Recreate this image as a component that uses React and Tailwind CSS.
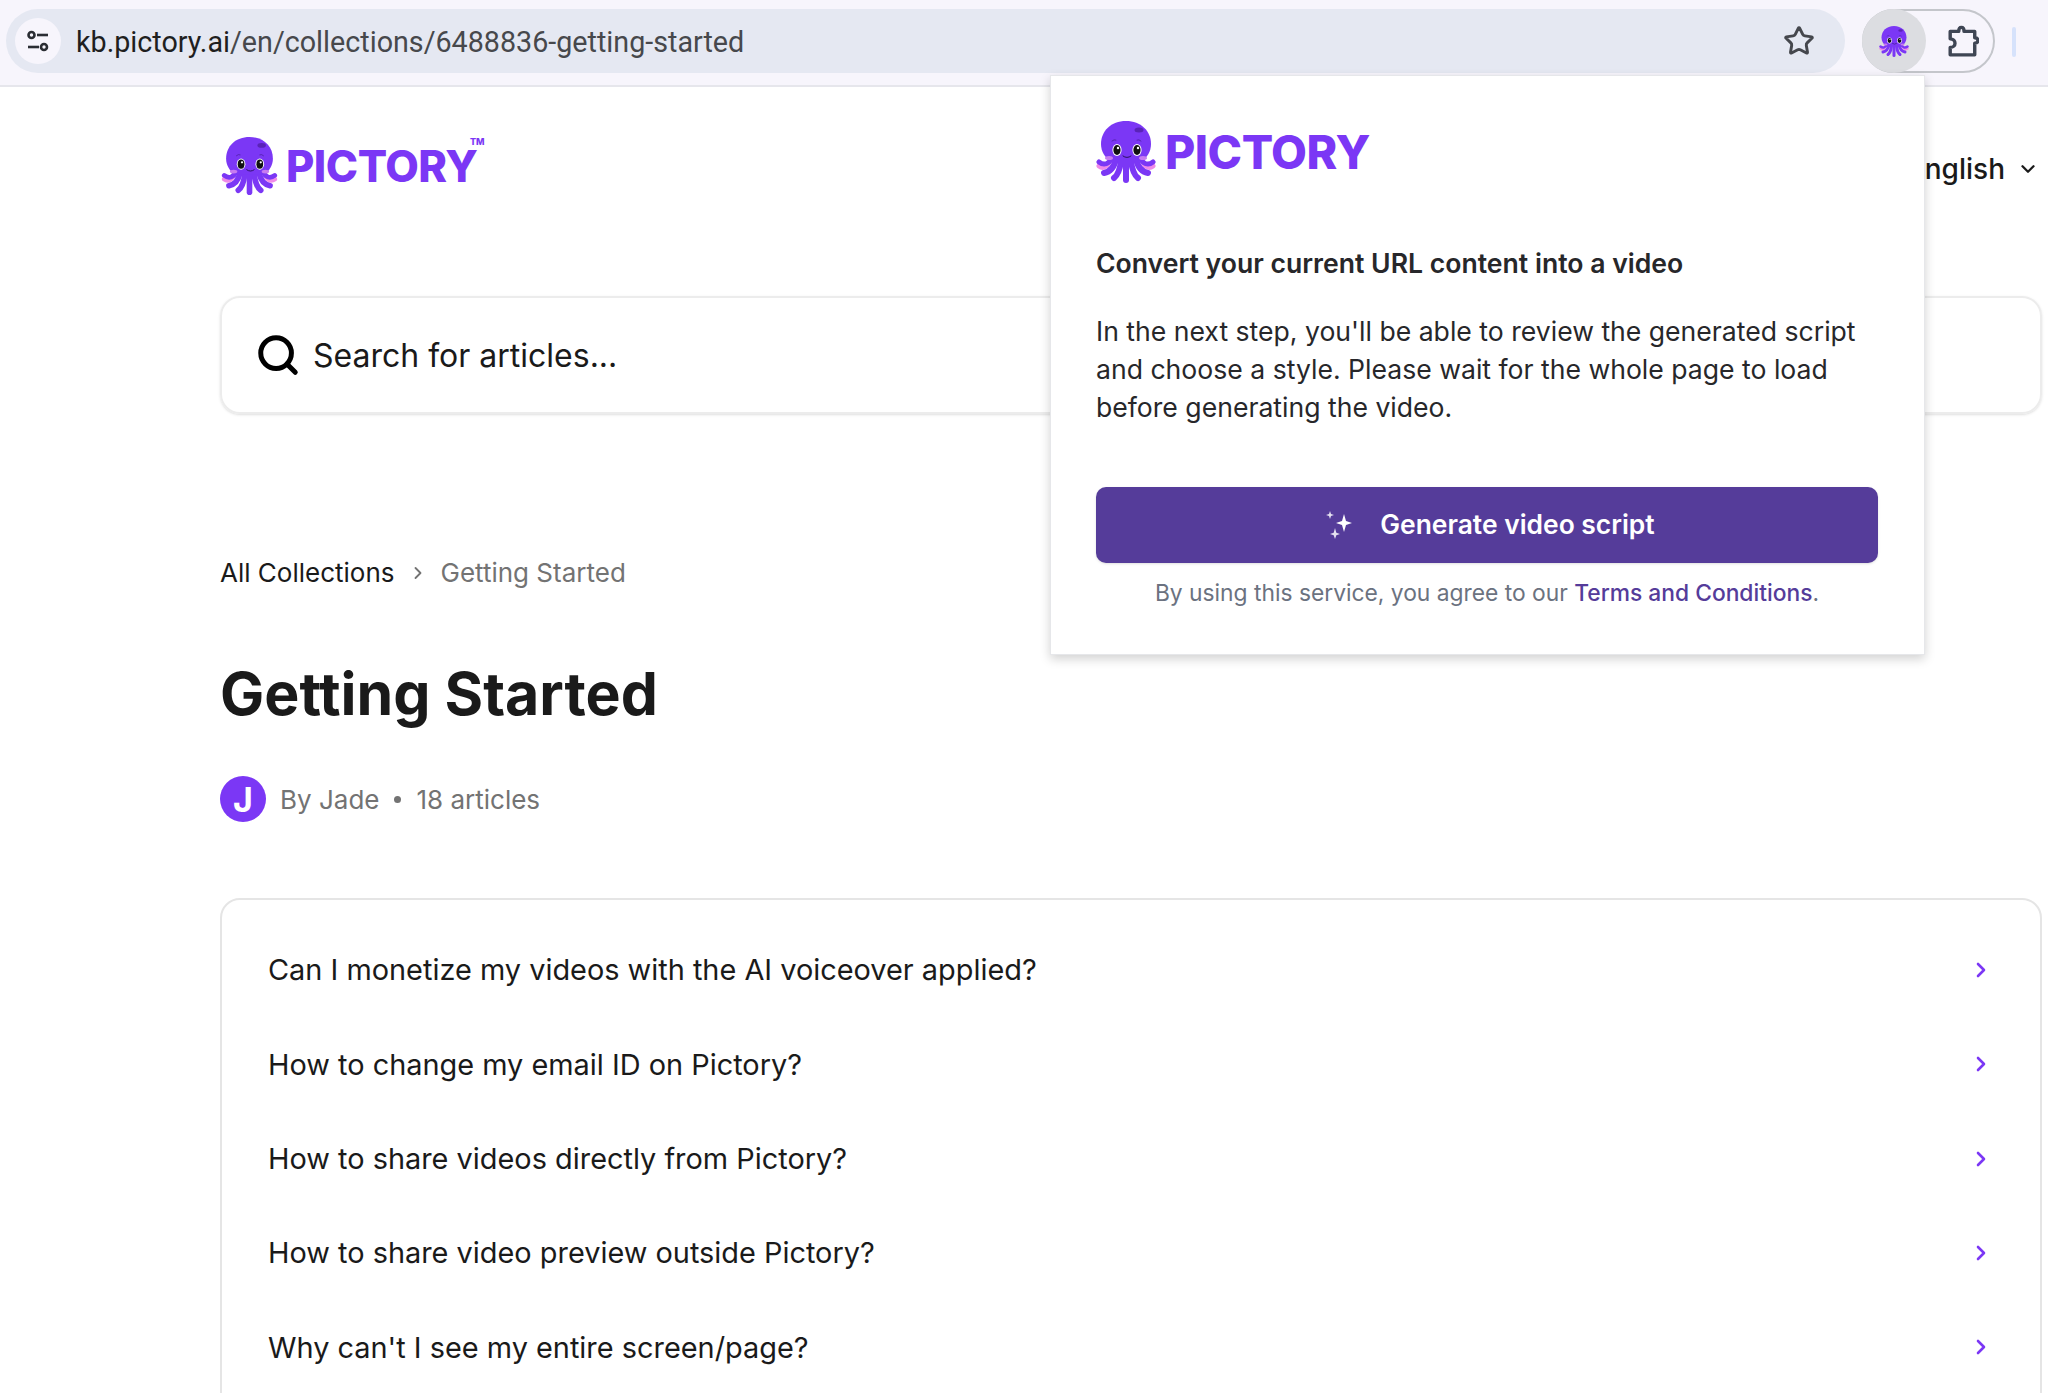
import { ChevronDown, ChevronRight, Search, Star } from "lucide-react";

const articles = [
  "Can I monetize my videos with the AI voiceover applied?",
  "How to change my email ID on Pictory?",
  "How to share videos directly from Pictory?",
  "How to share video preview outside Pictory?",
  "Why can't I see my entire screen/page?",
];

function Octopus({ className }) {
  return (
    <svg viewBox="0 0 60 62" className={className}>
      <g fill="none" strokeLinecap="round">
        <path d="M14 38C12 46 7 48 3 45" stroke="#f08ae8" strokeWidth="5" />
        <path d="M46 38C48 46 53 48 57 45" stroke="#f08ae8" strokeWidth="5" />
        <path d="M16 37C13 43 8 45 3 41" stroke="#7b37f5" strokeWidth="5" />
        <path d="M44 37C47 43 52 45 57 41" stroke="#7b37f5" strokeWidth="5" />
        <path d="M20 38C18 47 13 51 8 52" stroke="#7b37f5" strokeWidth="6" />
        <path d="M40 38C42 47 47 51 52 52" stroke="#7b37f5" strokeWidth="6" />
        <path d="M25 40C24 48 22 54 18 57" stroke="#7b37f5" strokeWidth="6" />
        <path d="M35 40C36 48 38 54 42 57" stroke="#7b37f5" strokeWidth="6" />
        <path d="M30 40V59" stroke="#7b37f5" strokeWidth="6" />
      </g>
      <path d="M30 0C15 0 5 10 5 23C5 31 9 36 14 40H46C51 36 55 31 55 23C55 10 45 0 30 0Z" fill="#7b37f5" />
      <ellipse cx="43" cy="9" rx="4.5" ry="2.5" fill="#5a23b8" />
      <ellipse cx="13" cy="37" rx="4" ry="2" fill="#c77bf0" />
      <ellipse cx="47" cy="37" rx="4" ry="2" fill="#c77bf0" />
      <ellipse cx="21" cy="29" rx="4.6" ry="6" fill="#fff" />
      <ellipse cx="41" cy="29" rx="4.6" ry="6" fill="#fff" />
      <ellipse cx="21" cy="29" rx="3.6" ry="4.9" fill="#111" />
      <ellipse cx="41" cy="29" rx="3.6" ry="4.9" fill="#111" />
      <circle cx="22" cy="27" r="1.2" fill="#fff" />
      <circle cx="42" cy="27" r="1.2" fill="#fff" />
      <path d="M27 35Q31 38 35 35" fill="none" stroke="#2b1260" strokeWidth="1" strokeLinecap="round" />
      <path d="M16 20Q18 18 20 19M41 19Q43 18 45 20" fill="none" stroke="#4b1fa0" strokeWidth="0.8" strokeLinecap="round" />
    </svg>
  );
}

function Sparkles() {
  return (
    <svg viewBox="0 0 26 28" className="w-[26px] h-[28px]" fill="#fff">
      <path d="M18 3L20 10L26 12L20 14L18 21L16 14L10 12L16 10Z" />
      <path d="M4 0L5 3L8 4L5 5L4 8L3 5L0 4L3 3Z" opacity="0.85" />
      <path d="M9 17L10.3 21.7L14 23L10.3 24.3L9 28L7.7 24.3L4 23L7.7 21.7Z" opacity="0.85" />
    </svg>
  );
}

export default function App() {
  return (
    <div className="relative h-[1393px] overflow-hidden bg-white text-[#1a1a1a] font-['Inter',sans-serif]">
      {/* browser toolbar */}
      <div className="h-[87px] bg-[#f7f5fc] border-b-2 border-[#e6e6ec] flex items-start pt-[9px] pl-[6px]">
        <div className="w-[1839px] h-[64px] rounded-full bg-[#e5e8f2] flex items-center pl-[9px] pr-[30px]">
          <div className="w-[46px] h-[46px] rounded-full bg-[#f7f5fc] flex items-center justify-center">
            <svg viewBox="0 0 28 28" className="w-[28px] h-[28px]" fill="none" stroke="#2a2d33" strokeWidth="2.6">
              <circle cx="7.5" cy="8" r="3" />
              <path d="M13 8H24" />
              <circle cx="20" cy="20" r="3" />
              <path d="M4 20H15" />
            </svg>
          </div>
          <div className="ml-[15px] mt-[2px] text-[28.7px] leading-none text-[#47484c] font-['Roboto',sans-serif]">
            <span className="text-[#1f1f1f]">kb.pictory.ai</span>/en/collections/6488836-getting-started
          </div>
          <Star className="ml-auto w-[32px] h-[32px] text-[#45474d]" strokeWidth={2.2} />
        </div>
        <div className="ml-[17px] w-[133px] h-[64px] rounded-full border-2 border-[#c4c6cb] flex items-center">
          <div className="w-[64px] h-[64px] -ml-[2px] rounded-full bg-[#dcdde1] flex items-center justify-center shrink-0">
            <Octopus className="w-[30px] h-[31px]" />
          </div>
          <svg viewBox="0 0 30 30" className="ml-[21px] w-[32px] h-[32px]" fill="none" stroke="#3f4654" strokeWidth="3.2" strokeLinejoin="round">
            <path d="M3 6H11C11 1 16 1 16 6H26V12C30 12 30 17 26 17V28H3V21C9 21 9 13 3 13Z" />
          </svg>
        </div>
        <div className="ml-[17px] mt-[18px] w-[4px] h-[30px] bg-[#d6e2fb] rounded-full" />
      </div>

      {/* page */}
      <div className="pl-[220px] pr-[6px]">
        <div className="h-[209px] flex items-start justify-between pt-[50px] pr-[3px]">
          <div className="relative flex items-center w-[262px] pl-[1px]">
            <Octopus className="w-[57px] h-[58px] shrink-0" />
            <span className="ml-[8px] text-[43.5px] leading-[34px] font-extrabold text-[#7b37f5] tracking-[-0.5px]">PICTORY</span>
            <span className="absolute left-[250px] top-[0px] text-[9px] leading-none font-extrabold text-[#7b37f5]">TM</span>
          </div>
          <div className="flex items-center mt-[11px] text-[28px] font-medium text-[#1a1a1a]">
            English
            <ChevronDown className="ml-[12px] w-[22px] h-[22px]" strokeWidth={2.5} />
          </div>
        </div>

        <div className="h-[118px] rounded-[20px] border-2 border-[#ececec] shadow-sm flex items-center pl-[33px]">
          <Search className="w-[46px] h-[46px] text-black" strokeWidth={2.6} />
          <span className="ml-[12px] mt-[1px] text-[32px] text-[#1a1a1a]">Search for articles...</span>
        </div>

        <div className="mt-[141px] flex items-center text-[26px] leading-[36px]">
          <span>All Collections</span>
          <ChevronRight className="mx-[13px] w-[20px] h-[20px] text-[#737373]" strokeWidth={2.2} />
          <span className="text-[#737373]">Getting Started</span>
        </div>

        <h1 className="mt-[67px] text-[59px] leading-[72px] font-bold text-[#1a1a1a]">Getting Started</h1>

        <div className="mt-[46px] flex items-center text-[26px] text-[#737373]">
          <div className="w-[46px] h-[46px] rounded-full bg-[#7b37f5] flex items-center justify-center text-white text-[34px] font-bold">J</div>
          <span className="ml-[14px]">By Jade</span>
          <span className="mx-[15px] w-[7px] h-[7px] rounded-full bg-[#737373]" />
          <span>18 articles</span>
        </div>

        <div className="mt-[76px] rounded-[20px] border-2 border-[#e5e5e5] pt-[23px] pb-[40px] pl-[46px] pr-[47px]">
          {articles.map(text => (
            <div key={text} className="h-[94.3px] flex items-center justify-between">
              <span className="text-[28.9px] text-[#1a1a1a]">{text}</span>
              <ChevronRight className="w-[24px] h-[24px] text-[#7b37f5]" strokeWidth={2.6} />
            </div>
          ))}
        </div>
      </div>

      {/* extension popup */}
      <div className="absolute left-[1050px] top-[75px] w-[875px] h-[580px] bg-white border border-[#e6e7ea] shadow-[0_4px_10px_rgba(0,0,0,0.18)] pl-[45px] pr-[46px] pt-[45px]">
        <div className="flex items-center">
          <Octopus className="w-[60px] h-[62px] shrink-0" />
          <span className="ml-[9px] text-[46.5px] leading-none font-extrabold text-[#7b37f5] tracking-[-0.5px]">PICTORY</span>
        </div>
        <h2 className="mt-[62px] text-[26.6px] leading-[36px] font-semibold text-[#27272a]">Convert your current URL content into a video</h2>
        <p className="mt-[31px] text-[26.6px] leading-[38px] text-[#27272a]">
          In the next step, you'll be able to review the generated script and choose a style. Please wait for the whole page to load before generating the video.
        </p>
        <button className="mt-[61px] w-full h-[76px] rounded-[10px] bg-[#553c9a] shadow-sm flex items-center justify-center gap-[28px] pl-[7px] text-white text-[26.4px] font-semibold">
          <Sparkles />
          Generate video script
        </button>
        <p className="mt-[13px] text-center text-[22.8px] leading-[34px] text-[#6b7280]">
          By using this service, you agree to our <span className="text-[#553c9a] font-medium">Terms and Conditions</span>.
        </p>
      </div>
    </div>
  );
}
